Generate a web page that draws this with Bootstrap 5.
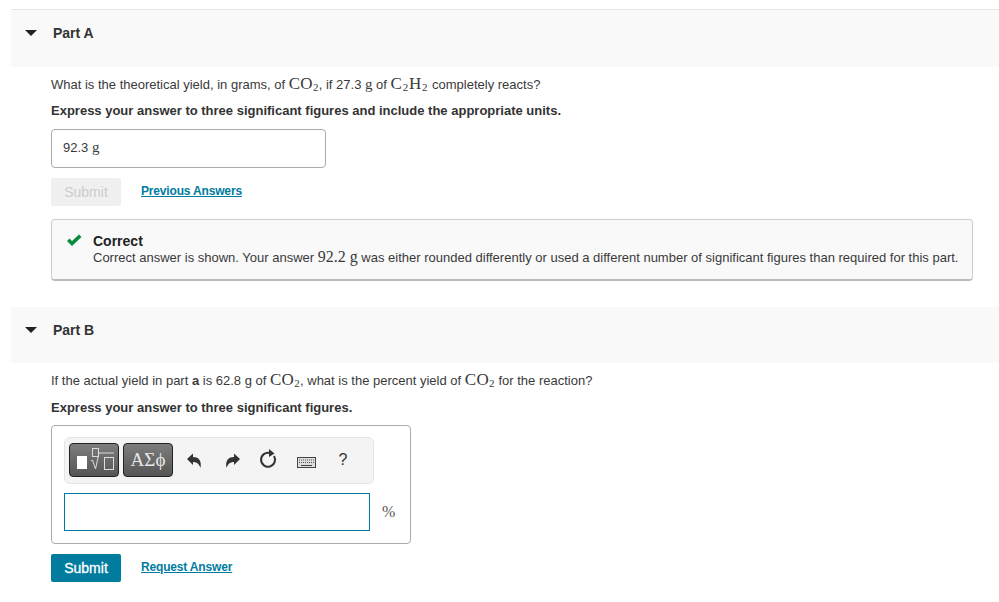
<!DOCTYPE html>
<html lang="en">
<head>
<meta charset="utf-8">
<link href="https://cdn.jsdelivr.net/npm/bootstrap@5.3.0/dist/css/bootstrap.min.css" rel="stylesheet">
<style>
html,body{height:602px;overflow:hidden}
body{font-family:"Liberation Sans",Arial,sans-serif;font-size:13px;color:#3a3a3a;background:#fff;padding:9px 0 0 11px}
.part-head{background:#f9f9f9;height:58px;border-top:1px solid #e6e6e6;font-size:14px;font-weight:700;color:#333;padding-top:15px;line-height:16px;gap:16px;padding-left:14px}
.part-head.second{border-top:0;height:56px;padding-top:15px;margin-top:26px}
.caret{width:0;height:0;border-left:6px solid transparent;border-right:6px solid transparent;border-top:6px solid #222;margin-top:5px}
.part-body{padding-left:40px}
.qline{line-height:18px;height:18px;margin:8px 0 0}
.strong-line{font-size:13px;font-weight:700;line-height:18px;margin:9px 0 0;color:#333}
.strong-line.wide{margin-top:10px}
.m{font-family:"Liberation Serif",serif;font-size:17px;letter-spacing:.3px}
.m.tiny{font-size:15px;letter-spacing:0}
.m.spread{letter-spacing:.8px}
.m sub{font-size:11px;bottom:-.2em}
.ansbox{width:275px;height:39px;border:1px solid #aaa;border-radius:4px;margin-top:9px;padding-left:11px;line-height:35px}
.ansbox .m{font-size:15px}
.actions{gap:20px;margin-top:10px;height:28px}
.sbtn{width:70px;height:28px;padding:0;border:0;border-radius:2px;font-size:14px;line-height:28px;font-weight:400}
.sbtn.off:disabled{background:#f0f0f0;color:#ccc;opacity:1}
.sbtn.on{background:#007c9f;color:#fff;-webkit-text-stroke:.3px #fff}
.sbtn.on:hover{background:#007c9f;color:#fff}
.alink{color:#007c9f;font-weight:700;font-size:12px;line-height:16px;margin-top:5px;letter-spacing:-.17px;text-decoration:underline}
.feedback{width:922px;height:62px;margin-top:13px;background:#f9f9f9;border:1px solid #ccc;border-bottom:2px solid #bbb;border-radius:4px;padding:14px 0 0 14px;gap:11px}
.feedback .t{font-size:14px;font-weight:700;line-height:15px;color:#222}
.feedback .d{line-height:16px}
.feedback .m{font-size:16px;letter-spacing:0}
.mathbox{width:360px;height:119px;margin-top:8px;border:1px solid #aaa;border-radius:4px;padding:11px 0 0 12px}
.tools{width:310px;height:47px;background:#f4f4f4;border:1px solid #e4e4e4;border-radius:6px;padding:5px 0 0 4px;gap:4px}
.tmpl{width:50px;height:34px;flex:none;border:1px solid #222;border-radius:4px;background:linear-gradient(#7d7d7d,#555);color:#e6e6e6}
.tmpl span{font-family:"Liberation Serif",serif;font-size:19px;line-height:32px;text-align:center;display:block}
.tmpl svg{display:block}
.tic{width:33px;height:34px;flex:none}
.tic svg{display:block}
.tic.q{font-size:16px;color:#333;line-height:34px;text-align:center;padding-left:3px}
.mathrow{margin-top:9px;gap:12px}
.mathin{width:306px;height:38px;border:1px solid #007c9f}
.pct{font-family:"Liberation Serif",serif;font-size:16px;color:#555;margin-top:7px}
</style>
</head>
<body>
<div class="part-head d-flex"><span class="caret"></span><span>Part A</span></div>
<div class="part-body">
<p class="qline">What is the theoretical yield, in grams, of <span class="m">CO<sub>2</sub></span>, if 27.3 <span class="m tiny">g</span> of <span class="m spread">C<sub>2</sub>H<sub>2</sub></span> completely reacts?</p>
<p class="strong-line">Express your answer to three significant figures and include the appropriate units.</p>
<div class="ansbox">92.3 <span class="m">g</span></div>
<div class="actions d-flex"><button class="btn sbtn off" type="button" disabled>Submit</button><a class="alink" href="#">Previous Answers</a></div>
<div class="feedback d-flex">
<svg width="16" height="13" viewBox="0 0 16 13" class="flex-shrink-0"><path d="M1 7l2.500-2.500L6 7l7-6.500L15.500 3 6 12z" fill="#0a8a3c"/></svg>
<div><div class="t">Correct</div><div class="d">Correct answer is shown. Your answer <span class="m">92.2 g</span> was either rounded differently or used a different number of significant figures than required for this part.</div></div>
</div>
</div>
<div class="part-head second d-flex"><span class="caret"></span><span>Part B</span></div>
<div class="part-body">
<p class="qline">If the actual yield in part <b>a</b> is 62.8 g of <span class="m">CO<sub>2</sub></span>, what is the percent yield of <span class="m">CO<sub>2</sub></span> for the reaction?</p>
<p class="strong-line wide">Express your answer to three significant figures.</p>
<div class="mathbox">
<div class="tools d-flex">
<div class="tmpl"><svg width="48" height="32" viewBox="0 0 48 32"><rect x="7" y="12" width="10" height="13" fill="#fff"/><rect x="22.500" y="4.500" width="6" height="8" fill="none" stroke="#ddd"/><path d="M21 17l1.500-1 3 9 3.500-16h15" fill="none" stroke="#ddd"/><rect x="34.500" y="13.500" width="9" height="12" fill="none" stroke="#ddd"/></svg></div>
<div class="tmpl"><span>ΑΣϕ</span></div>
<div class="tic"><svg width="33" height="34" viewBox="0 0 33 34"><path d="M10 16l6-5.500V14c5 0 9 3 7.500 11-1.500-4-3.500-6-7.500-6v3z" fill="#333"/></svg></div>
<div class="tic"><svg width="33" height="34" viewBox="0 0 33 34"><path d="M26 16l-6-5.500V14c-5 0-9 3-7.500 11 1.500-4 3.500-6 7.500-6v3z" fill="#333"/></svg></div>
<div class="tic"><svg width="33" height="34" viewBox="0 0 33 34"><path d="M23 13a7 7 0 1 1-4-3" fill="none" stroke="#333" stroke-width="2"/><path d="M18 6l5.500 4.500L18 14z" fill="#333"/></svg></div>
<div class="tic"><svg width="33" height="34" viewBox="0 0 33 34"><rect x="9.500" y="14.500" width="18" height="10" fill="#ddd" stroke="#444"/><path d="M11 17h15M11 19.500h15" stroke="#555" stroke-dasharray="1 1"/><path d="M13 22.500h11" stroke="#444"/></svg></div>
<div class="tic q">?</div>
</div>
<div class="mathrow d-flex"><div class="mathin"></div><div class="pct">%</div></div>
</div>
<div class="actions d-flex"><button class="btn sbtn on" type="button">Submit</button><a class="alink" href="#">Request Answer</a></div>
</div>
</body>
</html>
